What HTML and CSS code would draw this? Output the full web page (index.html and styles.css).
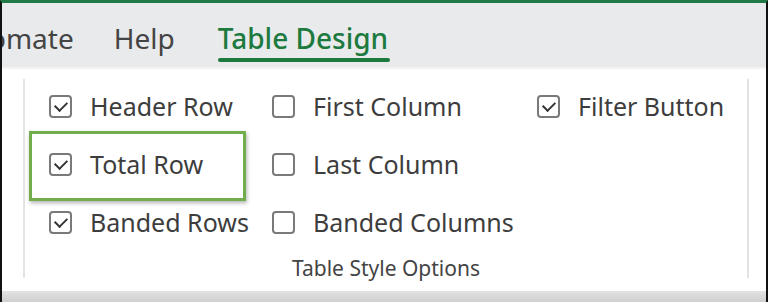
FILE: index.html
```html
<!DOCTYPE html>
<html lang="en">
<head>
  <meta charset="UTF-8" />
  <title>Table Design - Table Style Options</title>
  <link rel="stylesheet" href="styles.css">
</head>
<body>
  <div class="window">
    <div class="tabs">
      <span class="tab cut">omate</span>
      <span class="tab">Help</span>
      <span class="tab active">Table Design</span>
    </div>

    <div class="ribbon">
      <div class="group">
        <div class="options">
          <label class="opt"><span class="box on"></span>Header Row</label>
          <label class="opt"><span class="box"></span>First Column</label>
          <label class="opt"><span class="box on"></span>Filter Button</label>

          <label class="opt focus"><span class="box on"></span>Total Row</label>
          <label class="opt"><span class="box"></span>Last Column</label>
          <span></span>

          <label class="opt"><span class="box on"></span>Banded Rows</label>
          <label class="opt"><span class="box"></span>Banded Columns</label>
          <span></span>
        </div>
        <p class="group-name">Table Style Options</p>
      </div>
    </div>

    <div class="footer"></div>
  </div>
</body>
</html>
```

FILE: styles.css
```css
* { box-sizing: border-box; }

body {
  margin: 0;
  font-family: 'Noto Sans', 'Open Sans', sans-serif;
  color: #3b3b3b;
  background: #fff;
}

.window {
  width: 768px;
  height: 302px;
  border-top: 3px solid #1f7a45;
  border-left: 2px solid #111;
  border-right: 2px solid #111;
  display: flex;
  flex-direction: column;
  overflow: hidden;
}

.tabs {
  height: 66px;
  flex: none;
  background: #e9eaec;
  border-bottom: 2px solid #f3f3f4;
  display: flex;
  align-items: flex-start;
  padding-top: 17px;
  font-size: 28px;
  color: #444;
}

.tab {
  position: relative;
  margin-right: 40px;
  line-height: 36px;
}

.tab.cut {
  margin-left: -13px;
}

.tab.cut + .tab {
  margin-right: 43px;
}

.tab.active {
  color: #1d7a3e;
  font-weight: 500;
}

.tab.active::after {
  content: "";
  position: absolute;
  left: 0;
  right: -2px;
  bottom: -6px;
  height: 4px;
  border-radius: 2px;
  background: #1d7a3e;
}

.ribbon {
  flex: 1;
  min-height: 0;
  background: #fff;
  padding: 10px 17px 13px 21px;
}

.group {
  height: 100%;
  border-left: 2px solid #e3e3e3;
  border-right: 2px solid #e3e3e3;
  display: flex;
  flex-direction: column;
}

.options {
  display: grid;
  grid-template-columns: 223px 265px auto;
  grid-auto-rows: 34px;
  row-gap: 24px;
  padding: 10px 0 0 24px;
}

.opt {
  display: flex;
  align-items: center;
  height: 34px;
  font-size: 25px;
  color: #3d3d3d;
  white-space: nowrap;
}

.box {
  width: 23px;
  height: 23px;
  border: 2px solid #7a7a7a;
  border-radius: 4px;
  margin-right: 18px;
  position: relative;
  flex: none;
}

.box.on::after {
  content: "";
  position: absolute;
  left: 6px;
  top: 2px;
  width: 6px;
  height: 10px;
  border-right: 2px solid #333;
  border-bottom: 2px solid #333;
  transform: rotate(45deg);
}

.focus {
  position: relative;
}

.focus::before {
  content: "";
  position: absolute;
  left: -20px;
  top: -16px;
  width: 211px;
  height: 64px;
  border: 3px solid #72ad4c;
  box-shadow: 1px 2px 4px rgba(0, 0, 0, 0.3);
}

.group-name {
  margin: auto 0 -4px;
  text-align: center;
  font-size: 21px;
  color: #444;
}

.footer {
  height: 11px;
  flex: none;
  background: linear-gradient(#e2e2e2, #cfcfcf);
}
```
